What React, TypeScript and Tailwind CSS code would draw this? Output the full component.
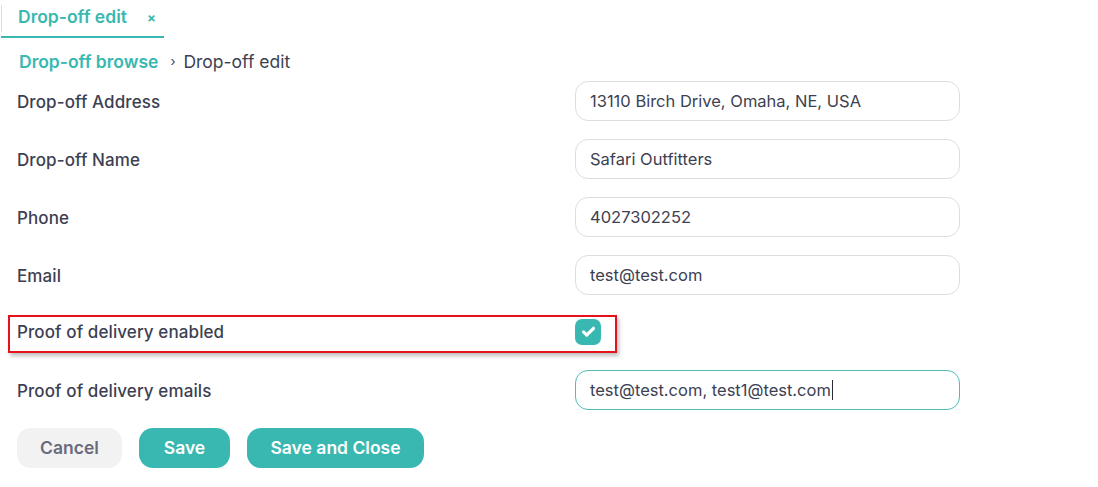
import React from 'react';

const fields = [
    { label: 'Drop-off Address', value: '13110 Birch Drive, Omaha, NE, USA' },
    { label: 'Drop-off Name', value: 'Safari Outfitters' },
    { label: 'Phone', value: '4027302252' },
    { label: 'Email', value: 'test@test.com' },
];

function Field({ label, value, focused }: { label: string; value: string; focused?: boolean }) {
    return (
        <div className="flex items-center h-10">
            <div className="w-[558px] text-[17px] tracking-[0.1px] font-medium text-[#3d3f52] mt-[3px]">{label}</div>
            <div
                className={`w-[385px] h-10 rounded-[13px] border flex items-center pl-[14px] text-[16.5px] text-[#3d3f52] ${focused ? 'border-[#4fbdb6]' : 'border-[#dedede]'
                    }`}
            >
                <span className="mt-[1px]">{value}</span>
                {focused && <span className="inline-block w-[1px] h-[20px] bg-[#2a2a3a] ml-[1px]" />}
            </div>
        </div>
    );
}

export default function App() {
    return (
        <div className="w-[1098px] h-[487px] bg-white font-['Inter',sans-serif] text-[#3d3f52] overflow-hidden">
            <div className="flex pt-[3px] pl-[1px]">
                <div className="flex items-center w-[163px] h-[35px] border-b-2 border-[#38b8b1] relative">
                    <div className="absolute left-0 top-[2px] h-[27px] w-[1px] bg-[#dcdcdc]" />
                    <span className="ml-[17px] text-[17.5px] font-semibold text-[#38b8b1] pb-[4px]">Drop-off edit</span>
                    <span className="ml-[20px] text-[13px] font-bold text-[#38b8b1] pb-[1px]">×</span>
                </div>
            </div>
            <div className="flex items-center h-[20px] mt-[14px] pl-[19px] text-[17.5px]">
                <span className="font-semibold text-[#38b8b1]">Drop-off browse</span>
                <span className="ml-[12px] text-[13px] text-[#3d3f52]">›</span>
                <span className="ml-[8px] text-[#3d3f52]">Drop-off edit</span>
            </div>
            <div className="flex flex-col gap-[18px] pl-[17px] mt-[9px]">
                {fields.map((f) => (
                    <Field key={f.label} label={f.label} value={f.value} />
                ))}
                <div className="flex items-center h-[39px] relative">
                    <div className="absolute left-[-9px] top-[2px] w-[609px] h-[38px] border-2 border-[#e4121b] shadow-[2px_3px_4px_rgba(0,0,0,0.25)]" />
                    <div className="w-[558px] text-[17px] tracking-[0.1px] font-medium text-[#3d3f52] mt-[1px]">Proof of delivery enabled</div>
                    <div className="w-[26px] h-[26px] rounded-[7px] bg-[#38b8b1] flex items-center justify-center -mt-[2px]">
                        <svg width="17" height="17" viewBox="0 0 24 24" fill="none" stroke="white" strokeWidth="4.5" strokeLinecap="round" strokeLinejoin="round">
                            <path d="M5 12.5l4.5 4.5L19 7.5" />
                        </svg>
                    </div>
                </div>
                <Field label="Proof of delivery emails" value="test@test.com, test1@test.com" focused />
            </div>
            <div className="flex gap-[17px] pl-[17px] mt-[18px]">
                <button className="w-[105px] h-10 rounded-[14px] bg-[#f2f2f3] text-[17.5px] font-semibold text-[#6b6a7c]">Cancel</button>
                <button className="w-[91px] h-10 rounded-[14px] bg-[#38b8b1] text-[17.5px] font-semibold text-white">Save</button>
                <button className="w-[177px] h-10 rounded-[14px] bg-[#38b8b1] text-[17.5px] font-semibold text-white">Save and Close</button>
            </div>
        </div>
    );
}
